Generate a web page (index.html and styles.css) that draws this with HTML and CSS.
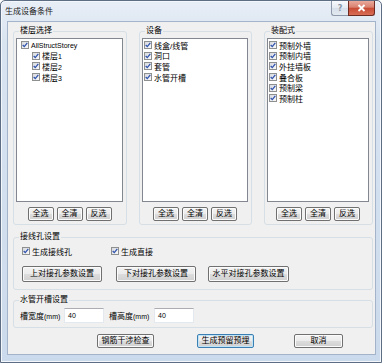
FILE: index.html
```html
<!DOCTYPE html>
<html lang="zh-CN">
<head>
<meta charset="utf-8">
<title>生成设备条件</title>
<link rel="stylesheet" href="styles.css">
</head>
<body>
<div class="window">
  <div class="titlebar">
    <span class="title">生成设备条件</span>
    <div class="caption">
      <span class="cap-btn help">?</span>
      <span class="cap-btn close"><svg width="11" height="8" viewBox="0 0 11 8"><path d="M2.5 1 L8.5 7 M8.5 1 L2.5 7" stroke="#fff" stroke-width="1.8"/></svg></span>
    </div>
  </div>
  <div class="client">
    <div class="top-groups">
      <fieldset class="group">
        <legend>楼层选择</legend>
        <div class="list tree">
          <div class="item"><span class="cb"><svg width="6" height="6" viewBox="0 0 6 6"><path d="M0.7 3 L2.3 4.6 L5.3 0.9" fill="none" stroke="#2f52ad" stroke-width="1.3"/></svg></span><span class="latin">AllStructStorey</span></div>
          <div class="item child"><span class="cb"><svg width="6" height="6" viewBox="0 0 6 6"><path d="M0.7 3 L2.3 4.6 L5.3 0.9" fill="none" stroke="#2f52ad" stroke-width="1.3"/></svg></span><span>楼层<span class="latin">1</span></span></div>
          <div class="item child"><span class="cb"><svg width="6" height="6" viewBox="0 0 6 6"><path d="M0.7 3 L2.3 4.6 L5.3 0.9" fill="none" stroke="#2f52ad" stroke-width="1.3"/></svg></span><span>楼层<span class="latin">2</span></span></div>
          <div class="item child"><span class="cb"><svg width="6" height="6" viewBox="0 0 6 6"><path d="M0.7 3 L2.3 4.6 L5.3 0.9" fill="none" stroke="#2f52ad" stroke-width="1.3"/></svg></span><span>楼层<span class="latin">3</span></span></div>
        </div>
        <div class="btn-row">
          <button class="btn small">全选</button>
          <button class="btn small">全清</button>
          <button class="btn small">反选</button>
        </div>
      </fieldset>
      <fieldset class="group">
        <legend>设备</legend>
        <div class="list plain">
          <div class="item"><span class="cb"><svg width="6" height="6" viewBox="0 0 6 6"><path d="M0.7 3 L2.3 4.6 L5.3 0.9" fill="none" stroke="#2f52ad" stroke-width="1.3"/></svg></span><span>线盒/线管</span></div>
          <div class="item"><span class="cb"><svg width="6" height="6" viewBox="0 0 6 6"><path d="M0.7 3 L2.3 4.6 L5.3 0.9" fill="none" stroke="#2f52ad" stroke-width="1.3"/></svg></span><span>洞口</span></div>
          <div class="item"><span class="cb"><svg width="6" height="6" viewBox="0 0 6 6"><path d="M0.7 3 L2.3 4.6 L5.3 0.9" fill="none" stroke="#2f52ad" stroke-width="1.3"/></svg></span><span>套管</span></div>
          <div class="item"><span class="cb"><svg width="6" height="6" viewBox="0 0 6 6"><path d="M0.7 3 L2.3 4.6 L5.3 0.9" fill="none" stroke="#2f52ad" stroke-width="1.3"/></svg></span><span>水管开槽</span></div>
        </div>
        <div class="btn-row">
          <button class="btn small">全选</button>
          <button class="btn small">全清</button>
          <button class="btn small">反选</button>
        </div>
      </fieldset>
      <fieldset class="group">
        <legend>装配式</legend>
        <div class="list plain">
          <div class="item"><span class="cb"><svg width="6" height="6" viewBox="0 0 6 6"><path d="M0.7 3 L2.3 4.6 L5.3 0.9" fill="none" stroke="#2f52ad" stroke-width="1.3"/></svg></span><span>预制外墙</span></div>
          <div class="item"><span class="cb"><svg width="6" height="6" viewBox="0 0 6 6"><path d="M0.7 3 L2.3 4.6 L5.3 0.9" fill="none" stroke="#2f52ad" stroke-width="1.3"/></svg></span><span>预制内墙</span></div>
          <div class="item"><span class="cb"><svg width="6" height="6" viewBox="0 0 6 6"><path d="M0.7 3 L2.3 4.6 L5.3 0.9" fill="none" stroke="#2f52ad" stroke-width="1.3"/></svg></span><span>外挂墙板</span></div>
          <div class="item"><span class="cb"><svg width="6" height="6" viewBox="0 0 6 6"><path d="M0.7 3 L2.3 4.6 L5.3 0.9" fill="none" stroke="#2f52ad" stroke-width="1.3"/></svg></span><span>叠合板</span></div>
          <div class="item"><span class="cb"><svg width="6" height="6" viewBox="0 0 6 6"><path d="M0.7 3 L2.3 4.6 L5.3 0.9" fill="none" stroke="#2f52ad" stroke-width="1.3"/></svg></span><span>预制梁</span></div>
          <div class="item"><span class="cb"><svg width="6" height="6" viewBox="0 0 6 6"><path d="M0.7 3 L2.3 4.6 L5.3 0.9" fill="none" stroke="#2f52ad" stroke-width="1.3"/></svg></span><span>预制柱</span></div>
        </div>
        <div class="btn-row">
          <button class="btn small">全选</button>
          <button class="btn small">全清</button>
          <button class="btn small">反选</button>
        </div>
      </fieldset>
    </div>

    <fieldset class="group wide jx">
      <legend>接线孔设置</legend>
      <div class="check-row">
        <label class="check first"><span class="cb"><svg width="6" height="6" viewBox="0 0 6 6"><path d="M0.7 3 L2.3 4.6 L5.3 0.9" fill="none" stroke="#2f52ad" stroke-width="1.3"/></svg></span><span>生成接线孔</span></label>
        <label class="check"><span class="cb"><svg width="6" height="6" viewBox="0 0 6 6"><path d="M0.7 3 L2.3 4.6 L5.3 0.9" fill="none" stroke="#2f52ad" stroke-width="1.3"/></svg></span><span>生成直接</span></label>
      </div>
      <div class="param-row">
        <button class="btn param b1">上对接孔参数设置</button>
        <button class="btn param b2">下对接孔参数设置</button>
        <button class="btn param b3">水平对接孔参数设置</button>
      </div>
    </fieldset>

    <fieldset class="group wide sg">
      <legend>水管开槽设置</legend>
      <div class="input-row">
        <span class="field-label">槽宽度<span class="latin">(mm)</span></span>
        <span class="textbox"><span class="latin">40</span></span>
        <span class="field-label second">槽高度<span class="latin">(mm)</span></span>
        <span class="textbox"><span class="latin">40</span></span>
      </div>
    </fieldset>

    <div class="actions">
      <button class="btn act a1">钢筋干涉检查</button>
      <button class="btn act a2 default">生成预留预埋</button>
      <button class="btn act a3">取消</button>
    </div>
  </div>
</div>
</body>
</html>
```

FILE: styles.css
```css
* { box-sizing: border-box; }
html, body { margin: 0; padding: 0; }
body {
  width: 382px;
  height: 363px;
  overflow: hidden;
  background: #ffffff;
  font-family: "Liberation Sans", "Noto Sans CJK SC", sans-serif;
  font-size: 8px;
  color: #000;
}

.window {
  width: 382px;
  height: 363px;
  border: 1px solid #5d6d83;
  border-radius: 5px 5px 0 0;
  background: linear-gradient(#e8eef6, #d9e4f1 40px, #cbdaec);
  box-shadow: inset 0 0 0 1px #f3f6fb;
  display: flex;
  flex-direction: column;
}

.titlebar {
  flex: none;
  height: 20px;
  display: flex;
  justify-content: space-between;
  align-items: flex-start;
  padding: 0 6px 0 4px;
}
.title {
  line-height: 20px;
  font-family: "Noto Sans CJK SC", sans-serif;
  font-size: 8px;
  color: #1a1a1a;
}
.caption { display: flex; height: 15px; }
.cap-btn {
  display: flex;
  align-items: center;
  justify-content: center;
  height: 15px;
}
.help {
  width: 17px;
  border: 1px solid #8d99aa;
  border-top: 0;
  border-right: 0;
  border-radius: 0 0 0 3px;
  background: linear-gradient(#f8fafd, #e4eaf2 50%, #d5dee9 50%, #e3e9f1);
  color: #8a96a6;
  font-family: "DejaVu Sans", sans-serif;
  font-size: 8px;
  font-weight: bold;
}
.close {
  width: 27px;
  border: 1px solid #6e2b22;
  border-top: 0;
  border-radius: 0 0 3px 0;
  background: linear-gradient(#eaa99b, #d98170 45%, #c84a34 50%, #d86e56);
}

.client {
  flex: none;
  margin: 0 5px 0 6px;
  background: #f0f0f0;
  border: 1px solid #a3b4ca;
  padding: 4px 2px 6px 5px;
}

.top-groups {
  display: grid;
  grid-template-columns: 114px 113px 109px;
  column-gap: 12px;
}

.group {
  margin: 0;
  min-width: 0;
  padding: 0 3px 3px 2px;
  border: 1px solid #d5dfe5;
  border-radius: 3px;
}
.group legend {
  padding: 0 1px;
  margin-left: 3px;
  line-height: 10px;
  font-size: 8px;
}

.list {
  margin-top: 2px;
  height: 164px;
  background: #fff;
  border: 1px solid #828790;
  padding-top: 1px;
}
.tree { padding-left: 4px; }
.plain { padding-left: 1px; }
.item {
  display: flex;
  align-items: center;
  gap: 2px;
  height: 10.6px;
  white-space: nowrap;
}
.item.child { padding-left: 11px; }

.latin { font-family: "Liberation Sans", sans-serif; font-size: 7px; }

.cb {
  flex: none;
  display: inline-flex;
  align-items: center;
  justify-content: center;
  width: 8px;
  height: 8px;
  border: 1px solid #8e8f8f;
  background: linear-gradient(135deg, #d6d9de, #fafafa);
}
.cb svg { display: block; }

.btn {
  font-family: "Liberation Sans", "Noto Sans CJK SC", sans-serif;
  font-size: 8px;
  color: #000;
  padding: 0;
  margin: 0;
  border: 1px solid #707070;
  border-radius: 2px;
  background: linear-gradient(#f3f3f3, #ebebeb 50%, #dddddd 50%, #d0d0d0);
  box-shadow: inset 0 0 0 1px #fbfbfb;
  line-height: 1;
}
.btn-row {
  margin-top: 5px;
  display: flex;
  justify-content: center;
  gap: 3px;
}
.btn.small { width: 26px; height: 14px; }

.wide { margin-top: 7px; }
.jx { padding-bottom: 7px; }
.check-row {
  margin-top: 4px;
  height: 10px;
  display: flex;
  align-items: center;
  padding-left: 6px;
}
.check {
  display: flex;
  align-items: center;
  gap: 2px;
}
.check.first { width: 89px; }
.param-row {
  margin-top: 10px;
  display: flex;
  padding-left: 6px;
}
.btn.param { height: 16px; width: 80px; }
.btn.b2 { margin-left: 14px; }
.btn.b3 { margin-left: 12px; width: 81px; }

.sg { margin-top: 5px; padding-bottom: 4px; }
.input-row {
  margin-top: 3px;
  display: flex;
  align-items: center;
  padding-left: 4px;
  height: 15px;
}
.field-label { width: 40px; white-space: nowrap; }
.field-label.second { margin-left: 5px; }
.textbox {
  margin-left: 4px;
  width: 40px;
  height: 15px;
  background: #fff;
  border: 1px solid #e3e9ef;
  border-top-color: #abadb3;
  padding-left: 3px;
  display: flex;
  align-items: center;
}
.textbox + .field-label.second + .textbox { margin-left: 5px; }

.actions {
  margin-top: 6px;
  display: flex;
  padding-left: 84px;
}
.btn.act { height: 14px; width: 57px; }
.btn.a2 { margin-left: 43px; }
.btn.a3 { margin-left: 40px; width: 49px; }
.btn.default {
  border-color: #3c7fb1;
  box-shadow: inset 0 0 0 1px #bfe4f8;
}
```
